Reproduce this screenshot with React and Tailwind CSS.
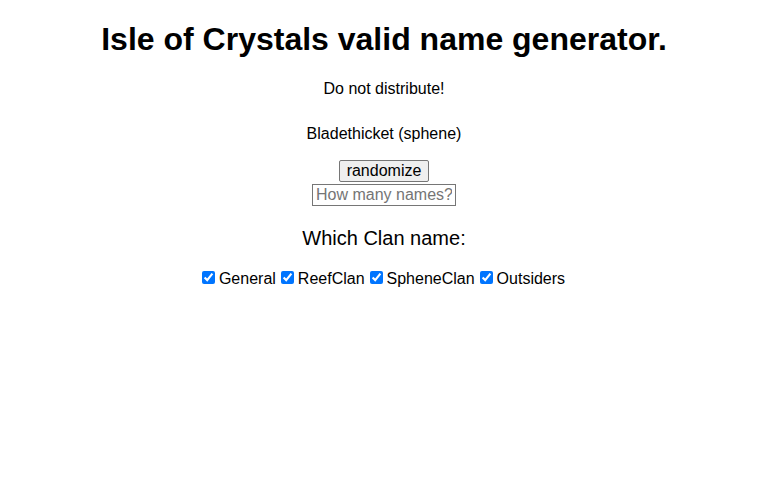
import React from 'react';

const clans = ['General', 'ReefClan', 'SpheneClan', 'Outsiders'];

export default function App() {
  return (
    <div className="min-h-[480px] bg-white text-black font-['Liberation_Sans',Arial,sans-serif] text-[16px] leading-[18px] flex flex-col items-center">
      <h1 className="mt-[21px] text-[32px] leading-[37px] font-bold">Isle of Crystals valid name generator.</h1>
      <p className="mt-[22px]">Do not distribute!</p>
      <p className="mt-[27px]">Bladethicket (sphene)</p>
      <button className="mt-[17px] h-[22px] px-[7px] bg-[#efefef] border border-[#767676] rounded-[2px] text-[16px] leading-[18px]">
        randomize
      </button>
      <input
        placeholder="How many names?"
        className="mt-[2px] w-[144px] h-[22px] px-[3px] border border-[#767676] text-[16px] leading-[18px] placeholder:text-[#757575] outline-none"
      />
      <h3 className="mt-[21px] text-[20px] leading-[23px]">Which Clan name:</h3>
      <div className="mt-[20px] pr-[4px] flex items-center leading-[18px]">
        {clans.map((c) => (
          <label key={c} className="flex items-center">
            <input type="checkbox" defaultChecked className="w-[13px] h-[13px] ml-[4px] mr-[4px] mb-[4px] accent-[#0075ff]" />
            <span className="mr-[1px]">{c}</span>
          </label>
        ))}
      </div>
    </div>
  );
}
